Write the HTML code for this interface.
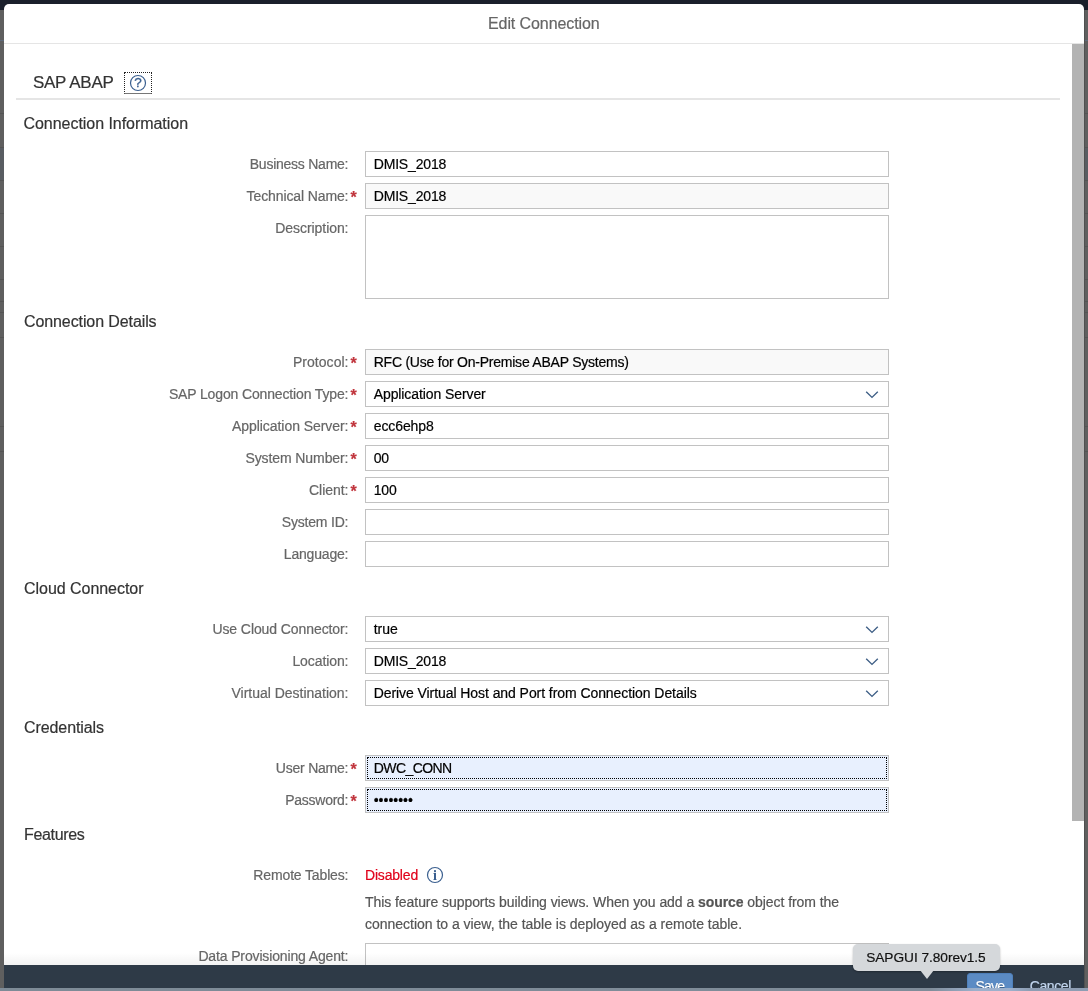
<!DOCTYPE html>
<html><head><meta charset="utf-8"><title>Edit Connection</title>
<style>
html,body{margin:0;padding:0;}
body{width:1088px;height:991px;overflow:hidden;position:relative;background:#5f5f5f;font-family:"Liberation Sans",sans-serif;}
.abs{position:absolute;}
.t{position:absolute;white-space:nowrap;-webkit-text-stroke:0.2px;}
#txt{position:absolute;left:0;top:0;width:1088px;height:991px;will-change:transform;}
.in{position:absolute;left:365px;width:522px;height:24px;border:1px solid #c2c2c2;background:#fff;}
.in.d{background:#f9f9f9;}
.in.a{background:#e8f0fe;}
.in.a:after{content:"";position:absolute;left:1px;top:1px;right:1px;bottom:1px;border:1px dotted #000;}
.chev{position:absolute;left:865px;width:14px;height:8px;}
</style></head><body>
<div class="abs" style="left:0;top:0;width:1088px;height:10px;background:#1a1f2b;"></div>

<div class="abs" style="left:0;top:147px;width:1088px;height:33px;background:#595d62;"></div>
<div class="abs" style="left:0;top:40px;width:1088px;height:1px;background:#5f6b7c;"></div>
<div class="abs" style="left:0;top:113px;width:1088px;height:1px;background:#545454;"></div>
<div class="abs" style="left:0;top:147px;width:1088px;height:1px;background:#545454;"></div>
<div class="abs" style="left:0;top:180px;width:1088px;height:1px;background:#545454;"></div>
<div class="abs" style="left:0;top:213px;width:1088px;height:1px;background:#545454;"></div>
<div class="abs" style="left:0;top:246px;width:1088px;height:1px;background:#545454;"></div>
<div class="abs" style="left:0;top:279px;width:1088px;height:1px;background:#545454;"></div>
<div class="abs" style="left:0;top:301px;width:1088px;height:1px;background:#545454;"></div>
<div class="abs" style="left:0;top:312px;width:1088px;height:1px;background:#545454;"></div>
<div class="abs" style="left:0;top:337px;width:1088px;height:1px;background:#545454;"></div>
<div class="abs" style="left:0;top:426px;width:1088px;height:1px;background:#545454;"></div>
<div class="abs" style="left:0;top:451px;width:1088px;height:1px;background:#545454;"></div>
<div class="abs" style="left:1084px;top:10px;width:1px;height:978px;background:#505050;"></div>
<div class="abs" id="dlg" style="left:4px;top:4px;width:1080px;height:984px;background:#fff;border-radius:5px 5px 0 0;overflow:hidden;">
</div>
<div class="abs" style="left:4px;top:43px;width:1080px;height:1px;background:#e5e5e5;"></div>
<div class="abs" style="left:1072px;top:44px;width:12px;height:777px;background:#b3b3b3;"></div>
<div class="abs" style="left:16px;top:98px;width:1044px;height:2px;background:#e5e5e5;"></div>

<div class="abs" style="left:124px;top:72px;width:26px;height:20px;border:1px dotted #222;border-bottom:1px solid #777;"></div>
<svg class="abs" style="left:129.2px;top:73.8px;will-change:transform;" width="18" height="18" viewBox="0 0 18 18"><circle cx="9" cy="9" r="7.5" fill="none" stroke="#3a5f8f" stroke-width="1.2"/><text x="9" y="13.4" text-anchor="middle" font-family="Liberation Sans, sans-serif" font-size="13.5" fill="#3a5f8f" stroke="#3a5f8f" stroke-width="0.3">?</text></svg>

<div class="in" style="top:151px;"></div>
<div class="in d" style="top:183px;"></div>
<div class="in d" style="top:349px;"></div>
<div class="in" style="top:381px;"></div>
<svg class="chev" style="top:391px;" viewBox="0 0 14 8"><path d="M1.2 0.8 L7 6.4 L12.8 0.8" fill="none" stroke="#3f5f86" stroke-width="1.4"/></svg>
<div class="in" style="top:413px;"></div>
<div class="in" style="top:445px;"></div>
<div class="in" style="top:477px;"></div>
<div class="in" style="top:509px;"></div>
<div class="in" style="top:541px;"></div>
<div class="in" style="top:616px;"></div>
<svg class="chev" style="top:626px;" viewBox="0 0 14 8"><path d="M1.2 0.8 L7 6.4 L12.8 0.8" fill="none" stroke="#3f5f86" stroke-width="1.4"/></svg>
<div class="in" style="top:648px;"></div>
<svg class="chev" style="top:658px;" viewBox="0 0 14 8"><path d="M1.2 0.8 L7 6.4 L12.8 0.8" fill="none" stroke="#3f5f86" stroke-width="1.4"/></svg>
<div class="in" style="top:680px;"></div>
<svg class="chev" style="top:690px;" viewBox="0 0 14 8"><path d="M1.2 0.8 L7 6.4 L12.8 0.8" fill="none" stroke="#3f5f86" stroke-width="1.4"/></svg>
<div class="in a" style="top:755px;"></div>
<div class="in a" style="top:787px;"></div>
<div class="in" style="top:215px;height:82px;"></div>
<div class="in" style="top:943px;height:30px;"></div>
<svg class="abs" style="left:425.6px;top:865.9px;will-change:transform;" width="18" height="18" viewBox="0 0 18 18"><circle cx="9" cy="9" r="7.5" fill="none" stroke="#3a5f8f" stroke-width="1.2"/><text x="9" y="13.8" text-anchor="middle" font-family="Liberation Serif, serif" font-weight="bold" font-size="14" fill="#3a5f8f">i</text></svg>
<div class="abs" style="left:4px;top:953px;width:1080px;height:12px;background:linear-gradient(rgba(0,0,0,0),rgba(0,0,0,0.05));"></div>
<div class="abs" style="left:4px;top:965px;width:1080px;height:23px;background:#2e3a47;"></div>
<div class="abs" style="left:967px;top:973px;width:44px;height:20px;background:#5b8bc4;border:1px solid #4f80bb;border-radius:3px 3px 0 0;"></div>
<div class="abs" style="left:853px;top:944px;width:147px;height:27px;background:#d5d8db;border-radius:5px;box-shadow:0 1px 2px rgba(0,0,0,0.3);"></div>
<svg class="abs" style="left:919px;top:970px;" width="16" height="10" viewBox="0 0 16 10"><path d="M1 0 L8 9 L15 0 Z" fill="#d5d8db"/></svg>
<div id="txt">
<div class="t" id="pw" style="left:373.7px;top:787px;line-height:26px;font-size:14px;color:#000;letter-spacing:0px;">••••••••</div>
<div class="t" id="t0" style="left:488px;top:11px;line-height:26px;font-size:16px;color:#666;letter-spacing:-0.091px;">Edit Connection</div>
<div class="t" id="t1" style="left:33px;top:70.3px;line-height:26px;font-size:17px;color:#333;letter-spacing:-0.295px;">SAP ABAP</div>
<div class="t" id="t2" style="left:23.5px;top:111.2px;line-height:26px;font-size:16px;color:#333;letter-spacing:-0.043px;">Connection Information</div>
<div class="t" id="t3" style="left:24px;top:309.2px;line-height:26px;font-size:16px;color:#333;letter-spacing:-0.100px;">Connection Details</div>
<div class="t" id="t4" style="left:24px;top:576.2px;line-height:26px;font-size:16px;color:#333;letter-spacing:-0.039px;">Cloud Connector</div>
<div class="t" id="t5" style="left:24px;top:715.2px;line-height:26px;font-size:16px;color:#333;letter-spacing:-0.085px;">Credentials</div>
<div class="t" id="t6" style="left:24px;top:822.2px;line-height:26px;font-size:16px;color:#333;letter-spacing:-0.330px;">Features</div>
<div class="t" id="t7" style="right:739.5px;top:151px;line-height:26px;font-size:14px;color:#666;letter-spacing:-0.246px;margin-right:0.246px;">Business Name:</div>
<div class="t" id="t8" style="right:739.5px;top:183px;line-height:26px;font-size:14px;color:#666;letter-spacing:-0.113px;margin-right:0.113px;">Technical Name:</div>
<div class="t" id="t9" style="left:350.6px;top:185px;line-height:26px;font-size:14px;color:#c0343c;font-weight:bold;font-size:16px;">*</div>
<div class="t" id="t10" style="right:739.5px;top:215px;line-height:26px;font-size:14px;color:#666;letter-spacing:-0.068px;margin-right:0.068px;">Description:</div>
<div class="t" id="t11" style="right:739.5px;top:349px;line-height:26px;font-size:14px;color:#666;letter-spacing:0.028px;margin-right:-0.028px;">Protocol:</div>
<div class="t" id="t12" style="left:350.6px;top:351px;line-height:26px;font-size:14px;color:#c0343c;font-weight:bold;font-size:16px;">*</div>
<div class="t" id="t13" style="right:739.5px;top:381px;line-height:26px;font-size:14px;color:#666;letter-spacing:-0.142px;margin-right:0.142px;">SAP Logon Connection Type:</div>
<div class="t" id="t14" style="left:350.6px;top:383px;line-height:26px;font-size:14px;color:#c0343c;font-weight:bold;font-size:16px;">*</div>
<div class="t" id="t15" style="right:739.5px;top:413px;line-height:26px;font-size:14px;color:#666;letter-spacing:-0.053px;margin-right:0.053px;">Application Server:</div>
<div class="t" id="t16" style="left:350.6px;top:415px;line-height:26px;font-size:14px;color:#c0343c;font-weight:bold;font-size:16px;">*</div>
<div class="t" id="t17" style="right:739.5px;top:445px;line-height:26px;font-size:14px;color:#666;letter-spacing:-0.089px;margin-right:0.089px;">System Number:</div>
<div class="t" id="t18" style="left:350.6px;top:447px;line-height:26px;font-size:14px;color:#c0343c;font-weight:bold;font-size:16px;">*</div>
<div class="t" id="t19" style="right:739.5px;top:477px;line-height:26px;font-size:14px;color:#666;letter-spacing:-0.027px;margin-right:0.027px;">Client:</div>
<div class="t" id="t20" style="left:350.6px;top:479px;line-height:26px;font-size:14px;color:#c0343c;font-weight:bold;font-size:16px;">*</div>
<div class="t" id="t21" style="right:739.5px;top:509px;line-height:26px;font-size:14px;color:#666;letter-spacing:-0.197px;margin-right:0.197px;">System ID:</div>
<div class="t" id="t22" style="right:739.5px;top:541px;line-height:26px;font-size:14px;color:#666;letter-spacing:-0.188px;margin-right:0.188px;">Language:</div>
<div class="t" id="t23" style="right:739.5px;top:616px;line-height:26px;font-size:14px;color:#666;letter-spacing:-0.087px;margin-right:0.087px;">Use Cloud Connector:</div>
<div class="t" id="t24" style="right:739.5px;top:648px;line-height:26px;font-size:14px;color:#666;letter-spacing:-0.092px;margin-right:0.092px;">Location:</div>
<div class="t" id="t25" style="right:739.5px;top:680px;line-height:26px;font-size:14px;color:#666;letter-spacing:-0.013px;margin-right:0.013px;">Virtual Destination:</div>
<div class="t" id="t26" style="right:739.5px;top:755px;line-height:26px;font-size:14px;color:#666;letter-spacing:-0.219px;margin-right:0.219px;">User Name:</div>
<div class="t" id="t27" style="left:350.6px;top:757px;line-height:26px;font-size:14px;color:#c0343c;font-weight:bold;font-size:16px;">*</div>
<div class="t" id="t28" style="right:739.5px;top:787px;line-height:26px;font-size:14px;color:#666;letter-spacing:-0.262px;margin-right:0.262px;">Password:</div>
<div class="t" id="t29" style="left:350.6px;top:789px;line-height:26px;font-size:14px;color:#c0343c;font-weight:bold;font-size:16px;">*</div>
<div class="t" id="t30" style="right:739.5px;top:862px;line-height:26px;font-size:14px;color:#666;letter-spacing:-0.144px;margin-right:0.144px;">Remote Tables:</div>
<div class="t" id="t31" style="right:739.5px;top:942.6px;line-height:26px;font-size:14px;color:#666;letter-spacing:-0.139px;margin-right:0.139px;">Data Provisioning Agent:</div>
<div class="t" id="t32" style="left:373.7px;top:151px;line-height:26px;font-size:14px;color:#000;letter-spacing:-0.160px;">DMIS_2018</div>
<div class="t" id="t33" style="left:373.7px;top:183px;line-height:26px;font-size:14px;color:#000;letter-spacing:-0.160px;">DMIS_2018</div>
<div class="t" id="t34" style="left:373.7px;top:349px;line-height:26px;font-size:14px;color:#000;letter-spacing:-0.229px;">RFC (Use for On-Premise ABAP Systems)</div>
<div class="t" id="t35" style="left:373.7px;top:381px;line-height:26px;font-size:14px;color:#000;letter-spacing:-0.090px;">Application Server</div>
<div class="t" id="t36" style="left:373.7px;top:413px;line-height:26px;font-size:14px;color:#000;letter-spacing:-0.090px;">ecc6ehp8</div>
<div class="t" id="t37" style="left:373.7px;top:445px;line-height:26px;font-size:14px;color:#000;letter-spacing:-0.289px;">00</div>
<div class="t" id="t38" style="left:373.7px;top:477px;line-height:26px;font-size:14px;color:#000;letter-spacing:-0.120px;">100</div>
<div class="t" id="t39" style="left:373.7px;top:616px;line-height:26px;font-size:14px;color:#000;letter-spacing:-0.031px;">true</div>
<div class="t" id="t40" style="left:373.7px;top:648px;line-height:26px;font-size:14px;color:#000;letter-spacing:-0.160px;">DMIS_2018</div>
<div class="t" id="t41" style="left:373.7px;top:680px;line-height:26px;font-size:14px;color:#000;letter-spacing:-0.069px;">Derive Virtual Host and Port from Connection Details</div>
<div class="t" id="t42" style="left:373.7px;top:755px;line-height:26px;font-size:14px;color:#000;letter-spacing:-0.557px;">DWC_CONN</div>
<div class="t" id="t43" style="left:365px;top:862px;line-height:26px;font-size:14px;color:#e0001a;letter-spacing:-0.186px;">Disabled</div>
<div class="t" id="t44" style="left:365px;top:891px;line-height:22px;font-size:14px;color:#555;letter-spacing:-0.061px;">This feature supports building views. When you add a <b>source</b> object from the</div>
<div class="t" id="t45" style="left:365px;top:913px;line-height:22px;font-size:14px;color:#555;letter-spacing:-0.020px;">connection to a view, the table is deployed as a remote table.</div>
<div class="t" id="t46" style="left:866.2px;top:945px;line-height:26px;font-size:13.7px;color:#111;letter-spacing:-0.042px;">SAPGUI 7.80rev1.5</div>
<div class="t" id="t47" style="left:975.4px;top:973px;line-height:26px;font-size:14px;color:#fff;letter-spacing:-0.780px;text-shadow:0 1px 1px rgba(0,0,0,0.35);">Save</div>
<div class="t" id="t48" style="left:1029.7px;top:973px;line-height:26px;font-size:14px;color:#c3d6ef;letter-spacing:-0.399px;">Cancel</div>
</div>
<div class="abs" style="left:0;top:987.5px;width:1088px;height:3.5px;background:linear-gradient(90deg,#7e8b97 0,#7f8c99 930px,#9cb0cc 975px,#9cb0cc 1010px,#8d9db3 1030px,#8d9db3 1088px);"></div>
</body></html>
